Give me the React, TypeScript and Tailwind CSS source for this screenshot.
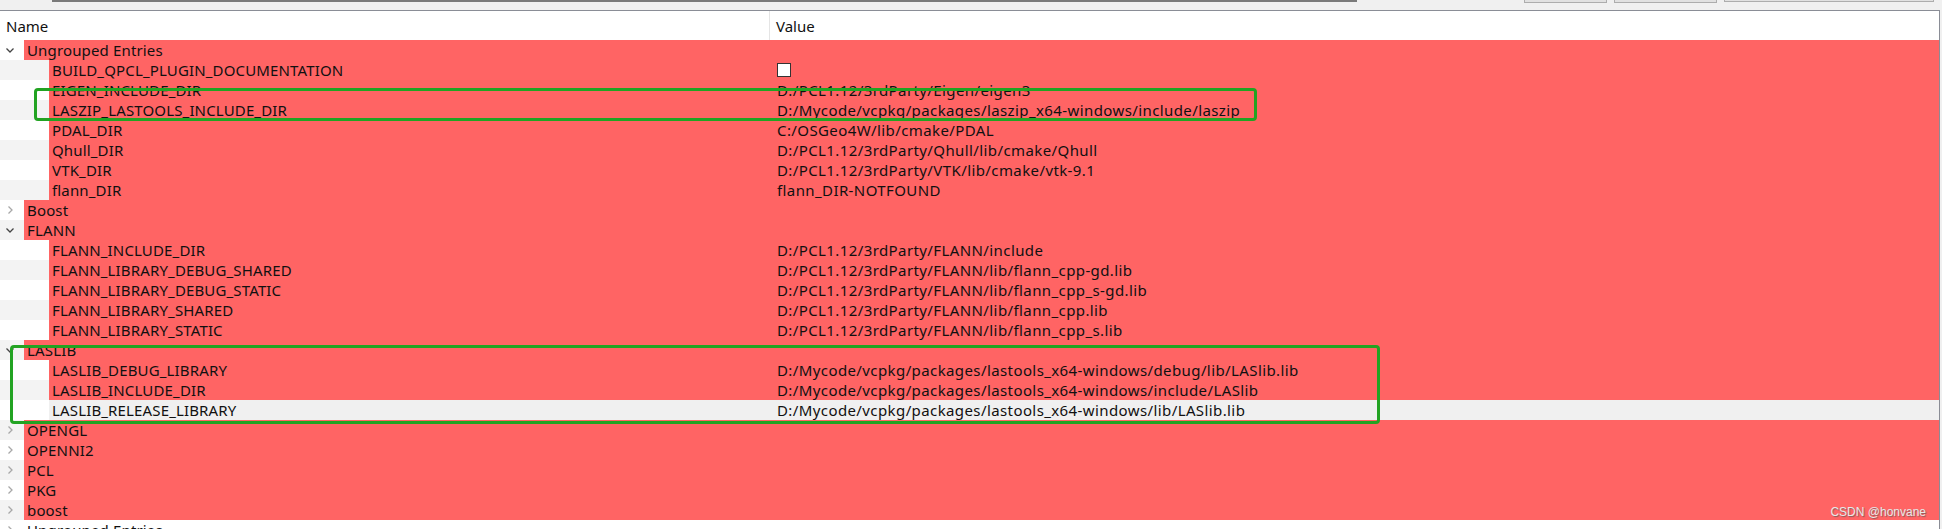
import React from 'react';

type Row = {
  name: string;
  value?: string;
  child?: boolean;
  open?: boolean;
  check?: boolean;
  plain?: boolean;
  hover?: boolean;
};

const rows: Row[] = [
  { name: 'Ungrouped Entries', open: true },
  { name: 'BUILD_QPCL_PLUGIN_DOCUMENTATION', child: true, check: true },
  { name: 'EIGEN_INCLUDE_DIR', child: true, value: 'D:/PCL1.12/3rdParty/Eigen/eigen3' },
  { name: 'LASZIP_LASTOOLS_INCLUDE_DIR', child: true, value: 'D:/Mycode/vcpkg/packages/laszip_x64-windows/include/laszip' },
  { name: 'PDAL_DIR', child: true, value: 'C:/OSGeo4W/lib/cmake/PDAL' },
  { name: 'Qhull_DIR', child: true, value: 'D:/PCL1.12/3rdParty/Qhull/lib/cmake/Qhull' },
  { name: 'VTK_DIR', child: true, value: 'D:/PCL1.12/3rdParty/VTK/lib/cmake/vtk-9.1' },
  { name: 'flann_DIR', child: true, value: 'flann_DIR-NOTFOUND' },
  { name: 'Boost' },
  { name: 'FLANN', open: true },
  { name: 'FLANN_INCLUDE_DIR', child: true, value: 'D:/PCL1.12/3rdParty/FLANN/include' },
  { name: 'FLANN_LIBRARY_DEBUG_SHARED', child: true, value: 'D:/PCL1.12/3rdParty/FLANN/lib/flann_cpp-gd.lib' },
  { name: 'FLANN_LIBRARY_DEBUG_STATIC', child: true, value: 'D:/PCL1.12/3rdParty/FLANN/lib/flann_cpp_s-gd.lib' },
  { name: 'FLANN_LIBRARY_SHARED', child: true, value: 'D:/PCL1.12/3rdParty/FLANN/lib/flann_cpp.lib' },
  { name: 'FLANN_LIBRARY_STATIC', child: true, value: 'D:/PCL1.12/3rdParty/FLANN/lib/flann_cpp_s.lib' },
  { name: 'LASLIB', open: true },
  { name: 'LASLIB_DEBUG_LIBRARY', child: true, value: 'D:/Mycode/vcpkg/packages/lastools_x64-windows/debug/lib/LASlib.lib' },
  { name: 'LASLIB_INCLUDE_DIR', child: true, value: 'D:/Mycode/vcpkg/packages/lastools_x64-windows/include/LASlib' },
  { name: 'LASLIB_RELEASE_LIBRARY', child: true, hover: true, value: 'D:/Mycode/vcpkg/packages/lastools_x64-windows/lib/LASlib.lib' },
  { name: 'OPENGL' },
  { name: 'OPENNI2' },
  { name: 'PCL' },
  { name: 'PKG' },
  { name: 'boost' },
  { name: 'Ungrouped Entries', plain: true },
];

const Chevron = ({ open }: { open?: boolean }) =>
  open ? (
    <svg width="10" height="10" viewBox="0 0 10 10">
      <path d="M1.5 3.5 L5 7 L8.5 3.5" fill="none" stroke="#444" strokeWidth="1.3" />
    </svg>
  ) : (
    <svg width="10" height="10" viewBox="0 0 10 10">
      <path d="M3.5 1.5 L7 5 L3.5 8.5" fill="none" stroke="#a8a8a8" strokeWidth="1.3" />
    </svg>
  );

const TreeRow = ({ row, i }: { row: Row; i: number }) => {
  const stripe = i % 2 === 1 ? 'bg-[#f3f3f3]' : 'bg-white';
  const fill = row.plain ? 'bg-white' : row.hover ? 'bg-[#f0f0f0]' : 'bg-[#ff6464]';
  return (
    <div className="flex h-[20px] shrink-0">
      <div className={`${row.child ? 'w-[49px]' : 'w-[24px]'} ${stripe} flex items-center pl-[5px]`}>
        {!row.child && <Chevron open={row.open} />}
      </div>
      <div className={`flex-1 flex items-center ${fill}`}>
        <div className={`${row.child ? 'w-[721px]' : 'w-[746px]'} pl-[3px] tracking-[0.15px] whitespace-nowrap overflow-hidden`}>
          {row.name}
        </div>
        <div className="pl-[7px] flex items-center tracking-[0.4px] whitespace-nowrap">
          {row.check ? <div className="w-[14px] h-[14px] bg-white border border-[#333]" /> : row.value}
        </div>
      </div>
    </div>
  );
};

export default function App() {
  return (
    <div
      className="relative w-[1942px] h-[529px] overflow-hidden bg-[#f0f0f0] text-[15px] leading-[20px] text-[#111]"
      style={{ fontFamily: '"Noto Sans", "Open Sans", sans-serif' }}
    >
      {/* top strip: bottom edge of search box and buttons */}
      <div className="flex h-[10px] items-start">
        <div className="w-[52px]" />
        <div className="w-[1305px] h-[2px] bg-[#7a7a7a]" />
        <div className="w-[167px]" />
        <div className="w-[83px] h-[3px] bg-[#e1e1e1] border-b border-x border-[#adadad]" />
        <div className="w-[7px]" />
        <div className="w-[103px] h-[3px] bg-[#e1e1e1] border-b border-x border-[#adadad]" />
        <div className="w-[7px]" />
        <div className="w-[210px] h-[2px] bg-[#e1e1e1] border-b border-x border-[#adadad]" />
      </div>

      <div className="w-[1940px] h-[519px] border-t border-r border-[#8a8d96] bg-white flex flex-col">
        <div className="flex h-[29px] shrink-0 bg-white">
          <div className="w-[770px] pl-[6px] flex items-center border-r border-[#e5e5e5]">Name</div>
          <div className="pl-[6px] flex items-center">Value</div>
        </div>
        {rows.map((r, i) => (
          <TreeRow key={i} row={r} i={i} />
        ))}
      </div>

      {/* annotation boxes */}
      <div className="absolute left-[34px] top-[88px] w-[1223px] h-[33px] border-[3px] border-[#22a322] rounded-[4px]" />
      <div className="absolute left-[10px] top-[345px] w-[1370px] h-[79px] border-[3px] border-[#22a322] rounded-[4px]" />

      <div
        className="absolute right-[16px] bottom-[10px] text-[12px] leading-[14px] text-[#e8e8e8] [text-shadow:1px_1px_1px_#8a5a5a]"
        style={{ fontFamily: '"Liberation Sans", sans-serif' }}
      >
        CSDN @honvane
      </div>
    </div>
  );
}
